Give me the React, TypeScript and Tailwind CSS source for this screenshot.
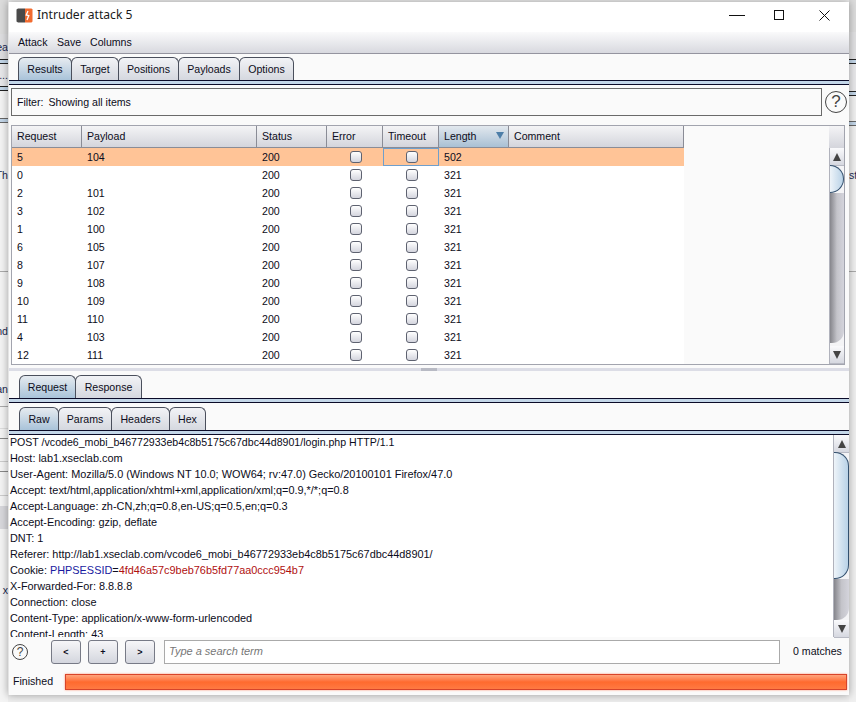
import React from "react";

const Lines = () => (
  <div className="h-[5px] shrink-0 border-y border-[#0b0b28] bg-[#c3d6e8]" />
);

const Tab = ({ label, w, active }: { label: string; w: string; active?: boolean }) => (
  <div
    className={`${w} h-[23px] -mr-px flex items-center justify-center rounded-t-[6px] border border-b-0 border-[#4a4f5c] ${
      active
        ? "bg-gradient-to-b from-[#e6ebf0] to-[#a9c3d9]"
        : "bg-gradient-to-b from-[#f2f3f6] to-[#d5d8df]"
    }`}
  >
    {label}
  </div>
);

const Check = () => (
  <div className="w-[12px] h-[12px] rounded-[3px] border border-[#5e6270] bg-gradient-to-b from-[#ffffff] to-[#d4d5de]" />
);

const Help = ({ size }: { size: string }) => (
  <div
    className={`${size} flex items-center justify-center rounded-full border-[1.5px] border-[#444] text-[#444]`}
  >
    ?
  </div>
);

const Up = () => (
  <div className="w-0 h-0 border-x-[4px] border-x-transparent border-b-[8px] border-b-[#444]" />
);
const Down = () => (
  <div className="w-0 h-0 border-x-[4px] border-x-transparent border-t-[8px] border-t-[#444]" />
);

const Arrow = ({ children }: { children: React.ReactNode }) => (
  <div className="h-[18px] shrink-0 flex items-center justify-center bg-gradient-to-b from-[#fafafc] to-[#d6d8e0] border-b border-[#b8bac4]">
    {children}
  </div>
);

const Scrollbar = ({ w, thumb, after }: { w: string; thumb: string; after: string }) => (
  <div className={`${w} shrink-0 flex flex-col border-l border-[#b0b2bc] bg-[#f4f4f6]`}>
    <Arrow><Up /></Arrow>
    <div className="flex-1 flex flex-col">
      <div className={`${thumb} shrink-0 -mt-px rounded-r-[14px] border-y border-r border-[#33506e] bg-gradient-to-r from-[#eef4f9] to-[#b9d2e7]`} />
      <div className={`${after} rounded-br-[12px] bg-gradient-to-r from-[#86868c] via-[#c4c4ca] to-[#d4d4dc]`} />
      <div className="flex-1" />
    </div>
    <Arrow><Down /></Arrow>
  </div>
);

const rows: [string, string, string][] = [
  ["0", "", "321"],
  ["2", "101", "321"],
  ["3", "102", "321"],
  ["1", "100", "321"],
  ["6", "105", "321"],
  ["8", "107", "321"],
  ["9", "108", "321"],
  ["10", "109", "321"],
  ["11", "110", "321"],
  ["4", "103", "321"],
  ["12", "111", "321"],
];

const cols = [
  { l: "Request", w: "w-[70px]" },
  { l: "Payload", w: "w-[175px]" },
  { l: "Status", w: "w-[70px]" },
  { l: "Error", w: "w-[56px]" },
  { l: "Timeout", w: "w-[56px]" },
  { l: "Length", w: "w-[70px]" },
  { l: "Comment", w: "w-[175px]" },
];

const Row = ({ r, sel }: { r: [string, string, string]; sel?: boolean }) => (
  <div className={`h-[18px] shrink-0 flex items-center ${sel ? "bg-[#ffc497]" : "bg-white"}`}>
    <div className="w-[70px] pl-[5px]">{r[0]}</div>
    <div className="w-[175px] pl-[5px]">{r[1]}</div>
    <div className="w-[70px] pl-[5px]">200</div>
    <div className="w-[56px] flex justify-center pl-[2px]"><Check /></div>
    <div className={`w-[56px] h-[18px] flex items-center justify-center pl-[2px] ${sel ? "border border-[#6f9fcc]" : ""}`}><Check /></div>
    <div className="w-[70px] pl-[5px]">{r[2]}</div>
    <div className="w-[175px]" />
  </div>
);

const Segs = ({ segs, align }: { segs: [string, string, string?][]; align: string }) => (
  <div className={`flex flex-col overflow-hidden ${align}`}>
    {segs.map((s, i) => (
      <div key={i} className={`${s[0]} ${s[1]} shrink-0 flex items-center whitespace-nowrap text-[#1a2a50] ${align}`}>
        {s[2] ?? ""}
      </div>
    ))}
  </div>
);

const leftSegs: [string, string, string?][] = [
  ["h-[34px]", "bg-[#dcdcdc]"],
  ["h-[25px]", "bg-[#dedee0]", "ea"],
  ["h-[5px]", "border-y border-[#222] bg-[#c3d6e8]"],
  ["h-[22px]", "bg-[#e8e8ea]", "..."],
  ["h-[5px]", "border-y border-[#222] bg-[#c3d6e8]"],
  ["h-[27px]", "bg-[#f4f4f4]"],
  ["h-[5px]", "border-y border-[#666] bg-[#c3d6e8]"],
  ["h-[44px]", "bg-[#f4f4f4]"],
  ["h-[16px]", "bg-[#f4f4f4]", "Th"],
  ["h-[89px]", "bg-[#f4f4f4] border-b border-[#aaa]"],
  ["h-[51px]", "bg-[#f4f4f4]"],
  ["h-[16px]", "bg-[#f4f4f4]", "nd"],
  ["h-[42px]", "bg-[#f4f4f4]"],
  ["h-[16px]", "bg-[#f4f4f4]", "an"],
  ["h-[10px]", "bg-[#f4f4f4] border-b border-[#aaa]"],
  ["h-[22px]", "bg-[#f4f4f4] border-b border-[#ddd]"],
  ["h-[10px]", "bg-[#f4f4f4] border-b border-[#888]"],
  ["h-[23px]", "bg-[#f4f4f4] border-b border-[#ccc]"],
  ["h-[10px]", "bg-[#f4f4f4] border-b border-[#888]"],
  ["h-[24px]", "bg-[#f4f4f4] border-b border-[#ccc]"],
  ["h-[10px]", "bg-[#f4f4f4]"],
  ["h-[23px]", "bg-[#d8d8dc]"],
  ["h-[53px]", "bg-[#f4f4f4]"],
  ["h-[16px]", "bg-[#f4f4f4]", "x"],
  ["h-[112px]", "bg-[#f4f4f4]"],
];

const rightSegs: [string, string, string?][] = [
  ["h-[32px]", "bg-[#dcdcdc]"],
  ["h-[27px]", "bg-[#e0e0e2]"],
  ["h-[5px]", "border-y border-[#222] bg-[#c3d6e8]"],
  ["h-[27px]", "bg-[#e8e8ea]"],
  ["h-[5px]", "border-y border-[#222] bg-[#c3d6e8]"],
  ["h-[25px]", "bg-[#f0f0f0]"],
  ["h-[5px]", "border-y border-[#666] bg-[#c3d6e8]"],
  ["h-[41px]", "bg-[#f0f0f0]"],
  ["h-[16px]", "bg-[#f0f0f0]", "ste"],
  ["h-[89px]", "bg-[#f0f0f0] border-b border-[#aaa]"],
  ["h-[430px]", "bg-[#f0f0f0]"],
];

export default function App() {
  return (
    <div className="w-[856px] h-[702px] flex overflow-hidden bg-[#eeeeee] text-[10.6px] leading-[14px] text-[#0c0c20] font-['Liberation_Sans',Arial,sans-serif]">
      <div className="w-[8px] shrink-0">
        <Segs segs={leftSegs} align="justify-end" />
      </div>

      <div className="relative z-10 w-[841px] h-[693px] mt-[2px] shrink-0 flex flex-col bg-[#fafafa] border-l border-[#e4e4e4] shadow-[0_0_8px_rgba(0,0,0,0.35)]">
        {/* title bar */}
        <div className="h-[30px] shrink-0 flex items-center pb-[4px] bg-white">
          <svg width="17" height="15" viewBox="0 0 17 15" className="ml-[7px]">
            <path d="M0.5 1.5L2 0.5H9V14.5H2L0.5 13.5z" fill="#4a4a4a" />
            <path d="M9 0.5H15.5L16.5 1.5V13.5L15.5 14.5H9z" fill="#f26b2f" />
            <path d="M12 3 L10.2 7 L12.8 7.6 L11 12" fill="none" stroke="#fff" strokeWidth="1.3" />
          </svg>
          <div className="ml-[4px] text-[12.1px] text-[#1a1a1a] font-['Noto_Sans',sans-serif]">Intruder attack 5</div>
          <div className="flex-1" />
          <div className="w-[16px] h-px bg-[#111] mr-[29px]" />
          <div className="w-[10px] h-[10px] border border-[#111] mr-[35px]" />
          <svg width="11" height="11" viewBox="0 0 11 11" className="mr-[19px]">
            <path d="M0.5 0.5L10.5 10.5M10.5 0.5L0.5 10.5" stroke="#111" strokeWidth="1" />
          </svg>
        </div>

        {/* menu bar */}
        <div className="h-[22px] shrink-0 flex items-center pl-[9px] pb-[2px] border-b border-[#94949f] bg-gradient-to-b from-[#fafafb] to-[#d8d9df]">
          <span className="w-[39px]">Attack</span>
          <span className="w-[33px]">Save</span>
          <span>Columns</span>
        </div>

        {/* top tabs */}
        <div className="h-[26px] shrink-0 flex items-end pl-[9px]">
          <Tab label="Results" w="w-[54px]" active />
          <Tab label="Target" w="w-[48px]" />
          <Tab label="Positions" w="w-[61px]" />
          <Tab label="Payloads" w="w-[62px]" />
          <Tab label="Options" w="w-[55px]" />
        </div>
        <Lines />

        {/* filter */}
        <div className="h-[28px] mt-[3px] shrink-0 flex items-center pl-[2px]">
          <div className="w-[811px] h-[28px] flex items-center gap-[5px] pl-[5px] border border-[#6a6a6a] bg-[#fafafa]">
            <span>Filter:</span>
            <span>Showing all items</span>
          </div>
          <div className="ml-[3px]"><Help size="w-[22px] h-[22px] text-[17px]" /></div>
        </div>

        {/* results table */}
        <div className="h-[240px] mt-[9px] ml-[2px] w-[834px] shrink-0 flex border border-[#a2a4ae]">
          <div className="flex-1 flex flex-col min-w-0">
            <div className="h-[22px] shrink-0 flex">
              {cols.map((c) => (
                <div
                  key={c.l}
                  className={`${c.w} flex items-center justify-between pl-[5px] pr-[4px] pb-[2px] border-r border-[#8a8c96] border-b ${
                    c.l === "Length"
                      ? "bg-gradient-to-b from-[#e2e8ee] to-[#a9c0d4]"
                      : "bg-gradient-to-b from-[#f4f4f6] to-[#d4d5dc]"
                  }`}
                >
                  {c.l}
                  {c.l === "Length" && (
                    <div className="w-0 h-0 border-x-[4px] border-x-transparent border-t-[7px] border-t-[#4d7ea8]" />
                  )}
                </div>
              ))}
            </div>
            <div className="w-[672px] flex-1 bg-white flex flex-col overflow-hidden">
              <Row r={["5", "104", "502"]} sel />
              {rows.map((r) => (
                <Row key={r[0]} r={r} />
              ))}
            </div>
          </div>
          <div className="w-[15px] shrink-0 flex flex-col">
            <div className="h-[22px] shrink-0 bg-gradient-to-b from-[#f4f4f6] to-[#d4d5dc]" />
            <Scrollbar w="w-[15px] flex-1" thumb="h-[28px]" after="h-[150px]" />
          </div>
        </div>

        {/* divider */}
        <div className="h-[10px] shrink-0 flex flex-col">
          <div className="h-[3px]" />
          <div className="h-[3px] bg-[#dcdde6] flex justify-center"><div className="w-[16px] bg-[#b8bac4]" /></div>
        </div>

        {/* request tabs */}
        <div className="h-[23px] shrink-0 flex items-end pl-[10px]">
          <Tab label="Request" w="w-[57px]" active />
          <Tab label="Response" w="w-[67px]" />
        </div>
        <Lines />
        <div className="h-[27px] shrink-0 flex items-end pl-[10px]">
          <Tab label="Raw" w="w-[40px]" active />
          <Tab label="Params" w="w-[54px]" />
          <Tab label="Headers" w="w-[59px]" />
          <Tab label="Hex" w="w-[37px]" />
        </div>
        <Lines />

        {/* raw text */}
        <div className="h-[202px] shrink-0 flex">
          <div className="flex-1 pl-[1px] bg-white overflow-hidden text-[10.9px] leading-[16px] whitespace-nowrap">
            <div className="text-[10.6px] -mt-px">POST /vcode6_mobi_b46772933eb4c8b5175c67dbc44d8901/login.php HTTP/1.1</div>
            <div>Host: lab1.xseclab.com</div>
            <div>User-Agent: Mozilla/5.0 (Windows NT 10.0; WOW64; rv:47.0) Gecko/20100101 Firefox/47.0</div>
            <div>Accept: text/html,application/xhtml+xml,application/xml;q=0.9,*/*;q=0.8</div>
            <div>Accept-Language: zh-CN,zh;q=0.8,en-US;q=0.5,en;q=0.3</div>
            <div>Accept-Encoding: gzip, deflate</div>
            <div>DNT: 1</div>
            <div>Referer: http://lab1.xseclab.com/vcode6_mobi_b46772933eb4c8b5175c67dbc44d8901/</div>
            <div>
              Cookie: <span className="text-[#1a1aa0]">PHPSESSID</span>=<span className="text-[#b01010]">4fd46a57c9beb76b5fd77aa0ccc954b7</span>
            </div>
            <div>X-Forwarded-For: 8.8.8.8</div>
            <div>Connection: close</div>
            <div>Content-Type: application/x-www-form-urlencoded</div>
            <div>Content-Length: 43</div>
          </div>
          <Scrollbar w="w-[16px]" thumb="h-[127px]" after="h-[41px]" />
        </div>

        {/* search row */}
        <div className="h-[29px] shrink-0 flex items-center pl-[3px]">
          <Help size="w-[16px] h-[16px] text-[12px]" />
          <div className="ml-[23px] flex gap-[7px]">
            {["<", "+", ">"].map((b) => (
              <div
                key={b}
                className="w-[30px] h-[24px] flex items-center justify-center rounded-[3px] border border-[#777a86] bg-gradient-to-b from-[#f6f6f8] to-[#d4d6de] text-[9px] font-bold"
              >
                {b}
              </div>
            ))}
          </div>
          <div className="ml-[9px] w-[616px] h-[24px] flex items-center pl-[4px] pb-[2px] border border-[#aaaaaa] bg-white italic text-[11px] text-[#777]">
            Type a search term
          </div>
          <div className="ml-[13px] pb-[2px]">0 matches</div>
        </div>

        {/* status row */}
        <div className="flex-1 flex items-center pl-[4px] pt-[2px]">
          <div className="w-[52px] pb-[2px]">Finished</div>
          <div className="w-[782px] h-[16px] border border-[#d8442a] bg-gradient-to-b from-[#ffa47c] via-[#ff6a2e] to-[#ff7a42] shadow-[0_0_2px_#ff9a7a]" />
        </div>
      </div>

      <div className="w-[7px] shrink-0">
        <Segs segs={rightSegs} align="justify-start" />
      </div>
    </div>
  );
}
